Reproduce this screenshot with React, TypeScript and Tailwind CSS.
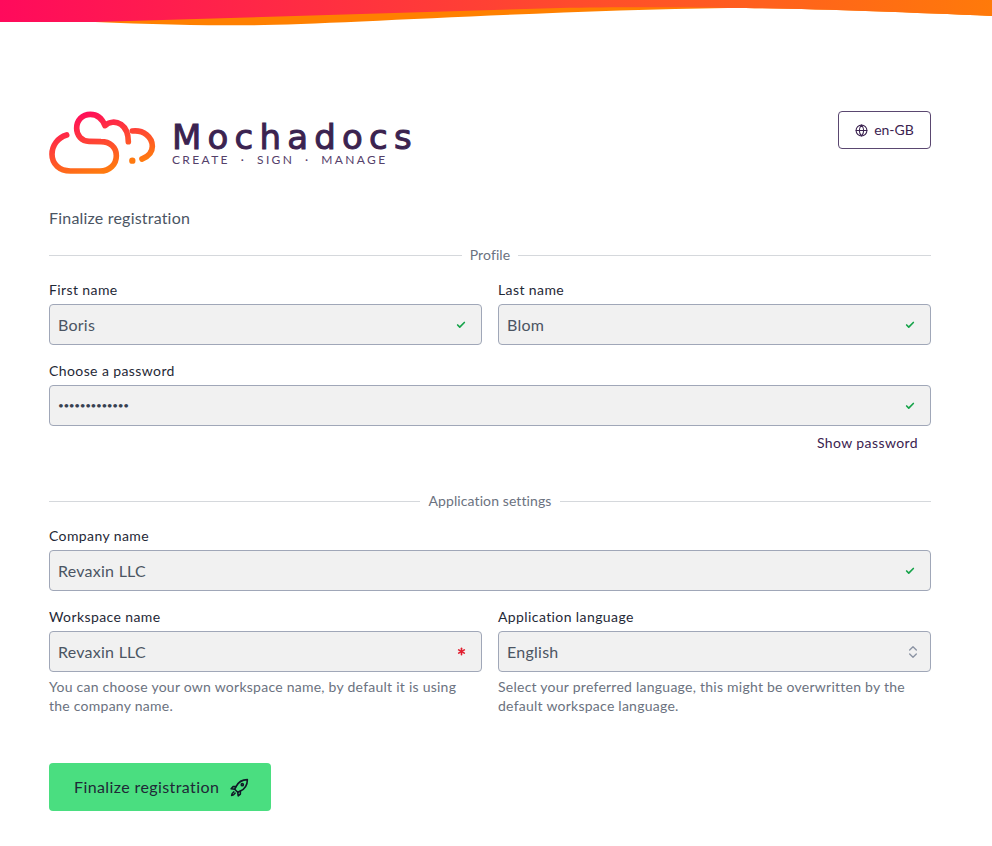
import { Check, Globe, ChevronsUpDown, Asterisk } from 'lucide-react';

function TopWave() {
  return (
    <svg viewBox="0 0 992 26" preserveAspectRatio="none" className="block w-full h-[26px]">
      <defs>
        <linearGradient id="wave" x1="0" y1="0" x2="1" y2="0">
          <stop offset="0" stopColor="#ff0a5c" />
          <stop offset="1" stopColor="#ff7a0a" />
        </linearGradient>
      </defs>
      <path d="M0 22 L95 22 C150 24.5 210 25.5 253 25.3 C340 24 560 10 728 8 C800 8 900 12 992 16 L992 0 L0 0 Z" fill="#ff8000" />
      <path d="M0 22 L95 22 L560 8 C610 7 680 7 728 8 C800 8 900 12 992 16 L992 0 L0 0 Z" fill="url(#wave)" />
    </svg>
  );
}

function Logo() {
  return (
    <div className="flex items-start gap-[15px]">
      <svg viewBox="12 15 324 195" className="w-[108px] h-[65px] shrink-0" fill="none">
        <defs>
          <linearGradient id="cloud" gradientUnits="userSpaceOnUse" x1="100" y1="22" x2="150" y2="205">
            <stop offset="0" stopColor="#ff0a5c" />
            <stop offset="1" stopColor="#ff7a10" />
          </linearGradient>
        </defs>
        <path
          d="M65 90 C38 98 21 122 21 148 C21 178 44 198 76 198 L165 198 C194 198 214 178 214 152 C214 126 194 110 168 110 L132 109 C110 108 95 92 95 70 C95 46 112 28 136 28 C157 28 172 42 180 62 C192 50 212 48 228 58 C242 68 250 86 250 110"
          stroke="url(#cloud)"
          strokeWidth="17"
          strokeLinecap="round"
          strokeLinejoin="round"
        />
        <path
          d="M262 78 C296 74 322 96 322 124 C322 142 310 155 291 162"
          stroke="url(#cloud)"
          strokeWidth="17"
          strokeLinecap="round"
        />
        <circle cx="262" cy="167" r="9.5" fill="#ff7a10" />
      </svg>
      <div className="pt-[9px]">
        <div className="font-['DejaVu_Sans',sans-serif] text-[34px] leading-[36px] tracking-[6.2px] text-[#3b2350] [-webkit-text-stroke:1px_#3b2350]">Mochadocs</div>
        <div className="text-[12px] leading-[10px] tracking-[2.35px] text-[#54406a] whitespace-pre">CREATE  ·  SIGN  ·  MANAGE</div>
      </div>
    </div>
  );
}

function Divider({ label }: { label: string }) {
  return (
    <div className="flex items-center gap-2 text-sm leading-5 text-[#6b7280]">
      <div className="flex-1 border-t border-[#d5d8dc]" />
      <span className="tracking-[0.1px]">{label}</span>
      <div className="flex-1 border-t border-[#d5d8dc]" />
    </div>
  );
}

function Field({ label, value, icon, small }: { label: string; value: string; icon: React.ReactNode; small?: boolean }) {
  return (
    <div>
      <label className="block text-sm leading-5 mb-[4px] tracking-[0.4px] text-[#1f2937]">{label}</label>
      <div className="h-[41px] flex items-center justify-between pl-2 pr-[15px] bg-[#f1f1f1] border border-[#a0a7b8] rounded-[4px]">
        <span className={small ? 'text-[10px] tracking-[-0.37px] text-[#374151]' : 'text-base tracking-[0.25px] text-[#4b5563]'}>{value}</span>
        {icon}
      </div>
    </div>
  );
}

const ok = <Check className="w-[10px] h-[10px] text-[#16a34a]" strokeWidth={4} />;

export default function App() {
  return (
    <div className="min-h-[846px] bg-white font-['Lato',sans-serif]">
      <TopWave />
      <div className="pt-[84px] pl-[49px] pr-[61px]">
        <div className="flex items-start justify-between">
          <Logo />
          <button className="mt-[1px] w-[93px] h-[38px] flex items-center justify-center gap-[6px] border border-[#5a4770] rounded-[4px] text-sm text-[#3b2350]">
            <Globe className="w-[13px] h-[13px]" />
            en-GB
          </button>
        </div>
        <h1 className="mt-[31px] text-base leading-6 tracking-[0.2px] text-[#4b5563] font-normal">Finalize registration</h1>
        <div className="mt-[15px]"><Divider label="Profile" /></div>
        <div className="mt-[15px] grid grid-cols-2 gap-x-4">
          <Field label="First name" value="Boris" icon={ok} />
          <Field label="Last name" value="Blom" icon={ok} />
        </div>
        <div className="mt-[16px]">
          <Field label="Choose a password" value="•••••••••••••" small icon={ok} />
        </div>
        <div className="mt-[7px] pr-[13px] text-right text-sm leading-5 tracking-[0.4px] text-[#3b2350]">Show password</div>
        <div className="mt-[38px]"><Divider label="Application settings" /></div>
        <div className="mt-[15px]">
          <Field label="Company name" value="Revaxin LLC" icon={ok} />
        </div>
        <div className="mt-[16px] grid grid-cols-2 gap-x-4">
          <div>
            <Field label="Workspace name" value="Revaxin LLC" icon={<Asterisk className="w-[13px] h-[13px] -mr-[2px] text-[#e11d2e]" strokeWidth={3} />} />
            <p className="mt-[5px] pr-[12px] text-sm leading-[19px] tracking-[0.25px] text-[#6b7280]">You can choose your own workspace name, by default it is using the company name.</p>
          </div>
          <div>
            <Field label="Application language" value="English" icon={<ChevronsUpDown className="w-4 h-4 -mr-[6px] text-[#8b93a3]" />} />
            <p className="mt-[5px] pr-[12px] text-sm leading-[19px] tracking-[0.25px] text-[#6b7280]">Select your preferred language, this might be overwritten by the default workspace language.</p>
          </div>
        </div>
        <button className="mt-[48px] w-[222px] h-[48px] pl-[25px] flex items-center gap-[10px] bg-[#4ade80] rounded-[4px] text-base tracking-[0.4px] text-[#1f2937]">
          Finalize registration
          <svg viewBox="0 0 24 24" className="w-[21px] h-[21px] text-[#111827]" fill="none" stroke="currentColor" strokeWidth="1.8" strokeLinecap="round" strokeLinejoin="round">
            <path d="M21 3 C15 3 10.5 6 8 11 L6.5 14 L10 17.5 L13 16 C18 13.5 21 9 21 3 Z" />
            <circle cx="15.2" cy="8.8" r="1.2" />
            <path d="M8 11 H4.5 L2.5 13.5 L6.5 14" />
            <path d="M13 16 V19.5 L10.5 21.5 L10 17.5" />
            <path d="M5.5 17 C4 18 3 19.5 3 21 C4.5 21 6 20 7 18.5" />
          </svg>
        </button>
      </div>
    </div>
  );
}
